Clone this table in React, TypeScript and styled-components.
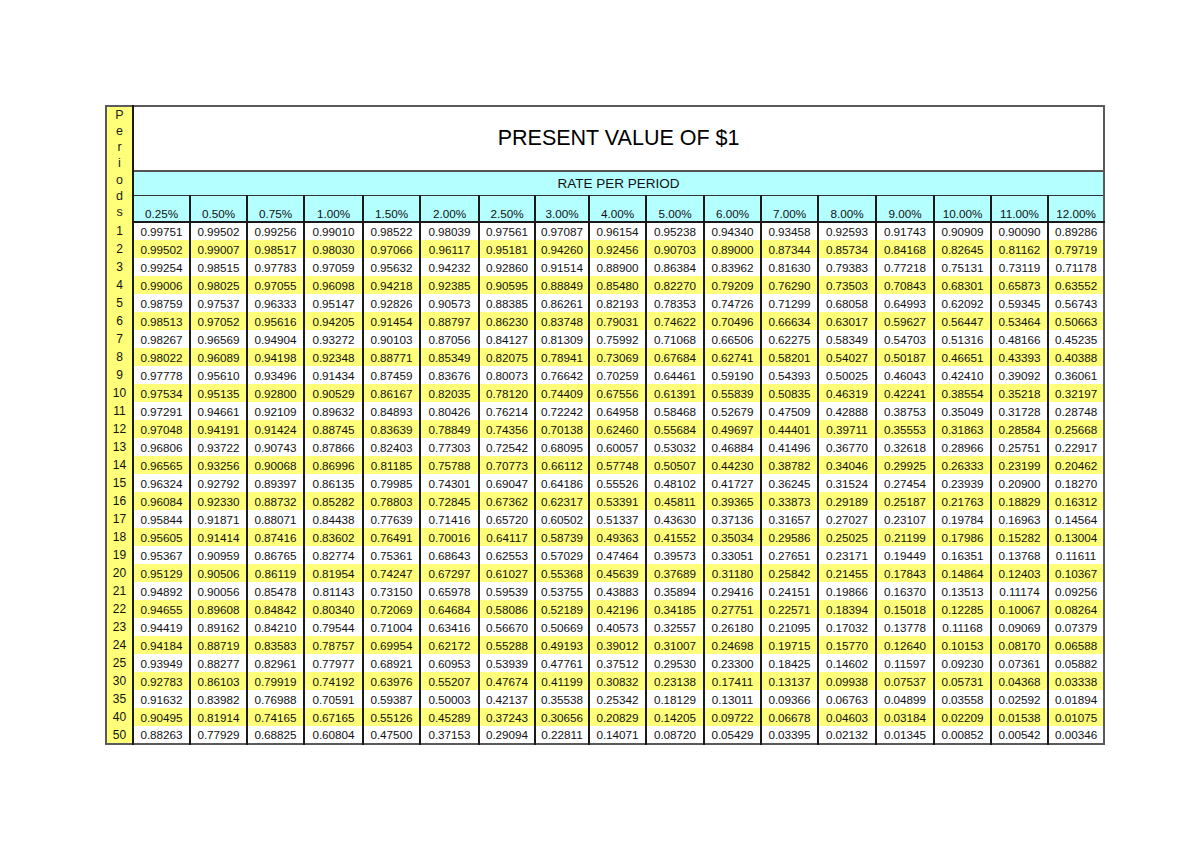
import styled, { createGlobalStyle } from "styled-components";

const GlobalStyle = createGlobalStyle`
  html, body {
    margin: 0;
    padding: 0;
    background: #ffffff;
  }
  body {
    font-family: "Liberation Sans", Arial, sans-serif;
    color: #111;
  }
`;

const RATES = [0.25, 0.5, 0.75, 1, 1.5, 2, 2.5, 3, 4, 5, 6, 7, 8, 9, 10, 11, 12];
const WIDTHS = [57, 57, 57, 59, 57, 59, 56, 54, 57, 58, 57, 57, 58, 58, 57, 57, 56];
const PERIODS = [
  1, 2, 3, 4, 5, 6, 7, 8, 9, 10, 11, 12, 13, 14, 15, 16, 17, 18, 19, 20, 21,
  22, 23, 24, 25, 30, 35, 40, 50,
];

const YELLOW = "#ffff7a";
const CYAN = "#b4ffff";
const LINE = "2px solid #1a1a1a";

const presentValue = (rate: number, n: number): string =>
  (1 / Math.pow(1 + rate / 100, n)).toFixed(5);

const Page = styled.div`
  padding: 105px 0 0 105px;
`;

const Table = styled.table`
  border-collapse: collapse;
  table-layout: fixed;
  width: 999px;
  border: 2px solid #5a5a5a;
  font-size: 11.7px;
`;

const PeriodHead = styled.td`
  background: ${YELLOW};
  border-right: ${LINE};
  padding: 0;
  vertical-align: top;
`;

const Letters = styled.div`
  display: flex;
  flex-direction: column;
  align-items: center;
  justify-content: space-between;
  height: 112px;
  padding-top: 1px;
  font-size: 12.5px;
  line-height: 15px;
  color: #222;
`;

const TitleCell = styled.td`
  height: 63px;
  background: #fff;
  border-bottom: 2px solid #555;
  text-align: center;
  font-size: 21.5px;
  color: #000;
  padding: 0;
`;

const RateTitle = styled.td`
  height: 23px;
  background: ${CYAN};
  border-bottom: 1.5px solid #333;
  text-align: center;
  font-size: 13.5px;
  color: #111;
  padding: 0;
`;

const RateHead = styled.td`
  height: 24px;
  background: ${CYAN};
  border-left: ${LINE};
  border-bottom: ${LINE};
  text-align: center;
  vertical-align: bottom;
  padding: 0 0 1px;
  color: #111;
`;

const Row = styled.tr<{ $shaded: boolean }>`
  height: 18px;
  background: ${(p) => (p.$shaded ? YELLOW : "#fff")};
`;

const PeriodCell = styled.td`
  background: ${YELLOW};
  border-right: ${LINE};
  text-align: center;
  padding: 0;
  font-size: 12px;
  color: #111;
`;

const ValueCell = styled.td`
  border-left: ${LINE};
  text-align: center;
  padding: 0;
  color: #111;
`;

export default function App() {
  return (
    <>
      <GlobalStyle />
      <Page>
        <Table>
          <colgroup>
            <col style={{ width: 27 }} />
            {WIDTHS.map((w, i) => (
              <col key={i} style={{ width: w }} />
            ))}
          </colgroup>
          <tbody>
            <tr>
              <PeriodHead rowSpan={3}>
                <Letters>
                  {"Periods".split("").map((c, i) => (
                    <span key={i}>{c}</span>
                  ))}
                </Letters>
              </PeriodHead>
              <TitleCell colSpan={17}>PRESENT VALUE OF $1</TitleCell>
            </tr>
            <tr>
              <RateTitle colSpan={17}>RATE PER PERIOD</RateTitle>
            </tr>
            <tr>
              {RATES.map((r) => (
                <RateHead key={r}>{r.toFixed(2)}%</RateHead>
              ))}
            </tr>
            {PERIODS.map((n, i) => (
              <Row key={n} $shaded={i % 2 === 1}>
                <PeriodCell>{n}</PeriodCell>
                {RATES.map((r) => (
                  <ValueCell key={r}>{presentValue(r, n)}</ValueCell>
                ))}
              </Row>
            ))}
          </tbody>
        </Table>
      </Page>
    </>
  );
}
